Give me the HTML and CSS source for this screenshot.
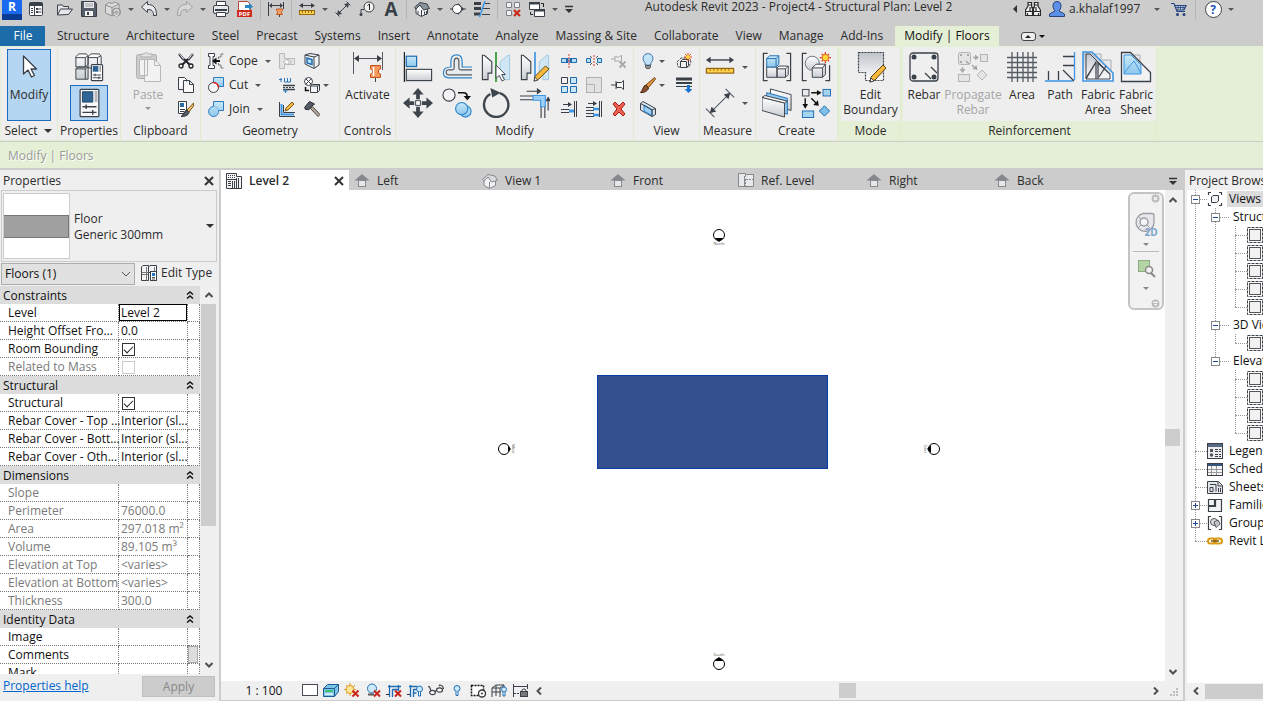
FILE: index.html
```
<!DOCTYPE html>
<html lang="en">
<head>
    <meta charset="utf-8">
    <title>Autodesk Revit 2023 - Project4 - Structural Plan: Level 2</title>
    <link rel="stylesheet" href="styles.css">
</head>
<body>
    <!-- Icon sprite -->
    <svg class="sprite" width="0" height="0" aria-hidden="true">
        <defs>
            <linearGradient id="gr" x1="0" y1="0" x2="0" y2="1"><stop offset="0" stop-color="#fff"/><stop offset="1" stop-color="#c9cdd3"/></linearGradient>
            <linearGradient id="gb" x1="0" y1="0" x2="0" y2="1"><stop offset="0" stop-color="#c8e8fa"/><stop offset="1" stop-color="#8ec8ea"/></linearGradient>
            <linearGradient id="gw" x1="0" y1="0" x2="0" y2="1"><stop offset="0" stop-color="#bfc3ca"/><stop offset="1" stop-color="#fff"/></linearGradient>
        </defs>

        <!-- quick access -->
        <symbol id="i-panel" viewBox="0 0 16 16"><rect x="1.500" y="1.500" width="13" height="13" rx="1" fill="#fff" stroke="#3a4048"/><path d="M1 2h14v3H1z" fill="#3a4048"/><path d="M6.500 5v9M3 7.500h2M3 9.500h2M3 11.500h2M8.500 8h5M8.500 11h5" stroke="#3a4048"/><rect x="8" y="7" width="2" height="2" fill="#3a4048"/><rect x="8" y="10" width="2" height="2" fill="#3a4048"/></symbol>
        <symbol id="i-open" viewBox="0 0 16 16"><path d="M.5 14V4h5l1 1.500h5V8M.5 14l3-6h12l-4 5.500z" fill="#e4e6ea" stroke="#3a4048" stroke-linejoin="round"/></symbol>
        <symbol id="i-save" viewBox="0 0 16 16"><path d="M.5.500h13l2 2v13H.5z" fill="#555d6a" stroke="#3a4048"/><rect x="3" y="1" width="10" height="6" fill="#e8eaed"/><rect x="4" y="10" width="8" height="5" fill="#f4f4f4"/><path d="M4 3h8M4 5h8" stroke="#9aa0a8"/><path d="M6 11h2v3H6z" fill="#3a4048"/></symbol>
        <symbol id="i-sync" viewBox="0 0 16 16"><path d="M.5 4L4 1.500l3 1L10 1l4 2v8l-7 4-6.500-3z" fill="#dcdcdc" stroke="#8f8f8f" stroke-linejoin="round"/><path d="M.5 4L7 6.500 14 3M7 6.500V15" fill="none" stroke="#8f8f8f"/><circle cx="11.500" cy="11" r="4" fill="#b0b0b0" stroke="#8f8f8f"/><path d="M9.500 10.500a2 2 0 0 1 4 0M13.500 12.500a2 2 0 0 1-4 0" fill="none" stroke="#eee"/></symbol>
        <symbol id="i-undo" viewBox="0 0 16 16"><path d="M.5 6L6.500.500v3C12 3.500 15.500 6 15.500 14.500h-3c0-5-2-6-6-6v3z" fill="#e8eaed" stroke="#3a4048" stroke-linejoin="round"/></symbol>
        <symbol id="i-redo" viewBox="0 0 16 16"><path d="M15.500 6L9.500.500v3C4 3.500.5 6 .5 14.500h3c0-5 2-6 6-6v3z" fill="#d8d8d8" stroke="#a2a2a2" stroke-linejoin="round"/></symbol>
        <symbol id="i-print" viewBox="0 0 16 16"><path d="M3.500.500h9V6h-9z" fill="#fff" stroke="#3a4048"/><rect x=".5" y="4.500" width="15" height="8" rx="1.500" fill="#e8eaed" stroke="#3a4048"/><path d="M2 8h12v2H2z" fill="#3a4048"/><path d="M3.500 11.500h9v4h-9z" fill="#fff" stroke="#3a4048"/></symbol>
        <symbol id="i-dimpin" viewBox="0 0 16 16"><path d="M.5 1v14M15.500 1v7M2 4.500h12" stroke="#3a4048" fill="none"/><path d="M1 4.500L4 2v5zM15 4.500L12 2v5z" fill="#3a4048"/><path d="M8.500 8h6v1.500l-1 1V12l1 1.500h-6l1-1.500v-1.500l-1-1z" fill="#f4a26a" stroke="#c8541c"/><path d="M11.500 14v2" stroke="#3a4048"/></symbol>
        <symbol id="i-measure" viewBox="0 0 16 16"><path d="M2 4.500h12" stroke="#3a4048"/><path d="M0 4.500L4 2v5zM16 4.500L12 2v5z" fill="#3a4048"/><rect x=".5" y="9.500" width="15" height="4" fill="#ffd34d" stroke="#94650f"/><path d="M3.500 10v2M6.500 10v2M9.500 10v2M12.500 10v2" stroke="#94650f"/></symbol>
        <symbol id="i-aligned" viewBox="0 0 16 16"><path d="M3 13L13 3M.5 11.500l4 4M11.500.5l4 4" stroke="#3a4048" fill="none"/><path d="M2 14l1-5 4 4zM14 2l-1 5-4-4z" fill="#3a4048"/></symbol>
        <symbol id="i-tag" viewBox="0 0 16 16"><circle cx="10" cy="6" r="5" fill="#f2f2f2" stroke="#3a4048"/><path d="M8.500 4.500L10.500 3v6" stroke="#222" fill="none"/><path d="M5 8.500H2v4" stroke="#3a4048" fill="none"/><circle cx="2" cy="13.500" r="1.500" fill="#3a4048"/></symbol>
        <symbol id="i-house" viewBox="0 0 16 16"><path d="M2 7v5.500l5.500 3 6-3V6L8 3z" fill="#f4f5f7" stroke="#3a4048" stroke-linejoin="round"/><path d="M.5 6.500L6 1.500l7 1.500 2.500 4.500-6 1.500L6 4 2 8z" fill="#8a929c" stroke="#3a4048" stroke-linejoin="round"/><path d="M7.500 9v6" stroke="#3a4048"/><path d="M4 10v3M10.500 10.500v3h2v-3.500" stroke="#3a4048" fill="none"/></symbol>
        <symbol id="i-section" viewBox="0 0 16 16"><path d="M8 2l6 6-6 6z" fill="#3a4048"/><circle cx="7" cy="8" r="4.500" fill="#fff" stroke="#3a4048"/><path d="M0 8h3M13 8h3" stroke="#3a4048"/></symbol>
        <symbol id="i-thin" viewBox="0 0 16 16"><path d="M0 2.500h7M0 7.500h7M0 13h6" stroke="#3a4048" stroke-width="3"/><path d="M10 2.500h6M9 7.500h7M8 13.500h8" stroke="#3a4048"/><path d="M11 0L5.500 16" stroke="#3c96e4" stroke-width="1.500"/></symbol>
        <symbol id="i-closeviews" viewBox="0 0 16 16"><path d="M1.500 1.500h5v5h-5zM9.500 1.500h5v5h-5zM1.500 9.500h5v5h-5z" fill="#f2f2f2" stroke="#7a8088"/><path d="M9 9l6 6M15 9l-6 6" stroke="#c9281a" stroke-width="2.200"/></symbol>
        <symbol id="i-switch" viewBox="0 0 16 16"><path d="M.5 1.500h10v7H.5zM5.500 8.500h10v7h-10z" fill="#fff" stroke="#3a4048"/><path d="M0 1h11v2.500H0zM5 8h11v2.500H5z" fill="#3a4048"/><path d="M12 2.500h2.500V6M4 13.500H1.500V11" stroke="#222" fill="none"/></symbol>
        <symbol id="i-custom" viewBox="0 0 16 16"><path d="M4 5.500h8" stroke="#333" stroke-width="1.500"/><path d="M4 8h8l-4 4z" fill="#333"/></symbol>
        <symbol id="i-binoc" viewBox="0 0 16 16"><path d="M3 1.500h3.500V5L7.500 8v6.500h-7V9L3 5zM9.500 1.500H13V5l2.500 4v5.500h-7V8L9.500 5z" fill="#f4f4f4" stroke="#2a2a2a" stroke-width="1.200"/><path d="M1 10.500h6M9 10.500h6M6.500 6.500h3M3 4h3M10 4h3M2.500 12v2M13.500 12v2M5 6v4M11 6v4" stroke="#2a2a2a" stroke-width="1.200"/></symbol>
        <symbol id="i-user" viewBox="0 0 16 16"><path d="M8 .5c3 0 4 2 4 4.500S10.500 9 10 10l5.500 3v2.500H.5V13L6 10C5.500 9 4 7.500 4 5S5 .5 8 .5z" fill="#5b8fe8" stroke="#28427c"/></symbol>
        <symbol id="i-cart" viewBox="0 0 16 16"><path d="M0 2.500h3l3 8h8M4 4.500h11l-2 4.500H5.500" fill="#c5d5f5" stroke="#26427c" stroke-width="1.200"/><path d="M7 5v4M9.500 5v4M12 5v4M4.500 6.500H14" stroke="#26427c" stroke-width=".8"/><circle cx="6.500" cy="13.500" r="1.500" fill="#26427c"/><circle cx="13" cy="13.500" r="1.500" fill="#26427c"/></symbol>

        <!-- small ribbon icons -->
        <symbol id="i-cutclip" viewBox="0 0 16 16"><path d="M1 1l5 6M15 1l-5 6" stroke="#3a4048" stroke-width="2.500"/><path d="M1.500 1l4.500 5.500M14.500 1L10 6.500" stroke="#d8dbdf"/><path d="M6 6l6 6M10 6l-6 6" stroke="#222" stroke-width="2"/><circle cx="3" cy="13" r="2" fill="#eee" stroke="#222" stroke-width="1.300"/><circle cx="13" cy="13" r="2" fill="#eee" stroke="#222" stroke-width="1.300"/></symbol>
        <symbol id="i-copyclip" viewBox="0 0 16 16"><path d="M.5 12.500V.5h6l2 2v2M5.500 3.500h6l4 4v8h-10z" fill="#f8f8f8" stroke="#3a4048"/><path d="M.5 12.500h5M11.500 3.500v4h4" fill="none" stroke="#3a4048"/></symbol>
        <symbol id="i-match" viewBox="0 0 16 16"><path d="M.5.500h8v12h-8z" fill="#fff" stroke="#3a4048"/><path d="M2 2h4v4H2z" fill="#2a6ea8"/><path d="M2 8.500h5M2 10.500h4" stroke="#3a4048"/><path d="M15.500 2L9 9l2 2 4.500-6z" fill="#f0c070" stroke="#7b5a20"/><path d="M8.500 9l2.500 2.500C10 15 6 15.500 3 15.500 6 14 6 10 8.500 9z" fill="#555d68" stroke="#22262c"/></symbol>
        <symbol id="i-cope" viewBox="0 0 16 16"><path d="M.5.500h6v3H5v9h1.500v3h-6v-3H2v-9H.5z" fill="#fff" stroke="#3a4048"/><path d="M15.500 1h-2.500v3h-2.500v2M15.500 15H13v-3h-2.500v-2" fill="none" stroke="#777"/><path d="M4 8l4.500-3.500V7H12v2H8.500v2.500z" fill="#111"/></symbol>
        <symbol id="i-cut" viewBox="0 0 16 16"><path d="M5.500.500h10v9h-10z" fill="url(#gb)" stroke="#2a7ac0"/><circle cx="5.500" cy="10.500" r="5" fill="#f6f6f6" stroke="#3a4048"/><path d="M5 5.500a5 5 0 0 1 5.500 5" fill="none" stroke="#e02020" stroke-width="1.500"/></symbol>
        <symbol id="i-join" viewBox="0 0 16 16"><path d="M5.500.500h10v9h-5A5 5 0 1 1 5.500 5.500z" fill="url(#gb)" stroke="#2a7ac0"/><path d="M5.500 5.500a5 5 0 0 1 5 4" fill="none" stroke="#7ab8dc"/></symbol>
        <symbol id="i-wallcope" viewBox="0 0 16 16"><path d="M.5.500h5v5h10v6h-10v4h-5z" fill="#e4e4e4" stroke="#b8b8b8"/><path d="M4 9l5-3v2h3v2H9v2z" fill="#fff" stroke="#b8b8b8"/></symbol>
        <symbol id="i-beam" viewBox="0 0 16 16"><path d="M0 2.500h3M5.500 1v4h6V1M8.500 1v4" stroke="#2a7ac0" fill="none"/><path d="M4 8.500h12M4 12.500h12" stroke="#3a4048" stroke-width="1.300"/><path d="M4 10.500h12" stroke="#3a4048" stroke-dasharray="2 1"/><path d="M6.500 12v4M4.500 14h4M2 1v4" stroke="#2a7ac0"/></symbol>
        <symbol id="i-demo" viewBox="0 0 16 16"><path d="M.5 1v14.500H16M4.500 4v7.500H16" fill="none" stroke="#3a4048"/><path d="M2.500 3v10.500H15" fill="none" stroke="#3c96e4" stroke-width="2"/><path d="M6 10l1-3 6-6 2 2-6 6z" fill="#f5b83c" stroke="#7b5a20"/></symbol>
        <symbol id="i-face" viewBox="0 0 16 16"><path d="M1 2l5-1.500 9 1.500v10l-5 3.500L1 11z" fill="#f2f3f5" stroke="#3a4048" stroke-linejoin="round"/><path d="M1 2l9 2v11M10 4l5-2" fill="none" stroke="#3a4048"/><path d="M3 5l5 1.500v5L3 10z" fill="#b8def4" stroke="#1c6db4" stroke-width="1.500"/></symbol>
        <symbol id="i-wheel" viewBox="0 0 16 16"><circle cx="4.500" cy="4.500" r="4" fill="#fff" stroke="#3a4048"/><path d="M2 2l5 5M7 2L2 7" stroke="#3a4048"/><path d="M6.500 9l2-1.500h7v6l-2 2h-7z" fill="#f4f5f7" stroke="#3a4048"/><path d="M6.500 9h7v6M13.500 9l2-1.500" fill="none" stroke="#3a4048"/><path d="M1.500 10v3.500H5" stroke="#111" fill="none" stroke-width="1.500"/></symbol>
        <symbol id="i-hammer" viewBox="0 0 16 16"><path d="M6.500 7.500l2-2L16 13.500 14 15.500z" fill="#b5a79a" stroke="#4a4440"/><path d="M.5 6.500l5-6 5 2.500-1 1-2 1-3 4-1.500-1-1 1z" fill="#555d68" stroke="#22262c"/></symbol>
        <symbol id="i-split" viewBox="0 0 16 16"><path d="M.5 5.500h5v4h-5zM10.500 5.500h5v4h-5z" fill="#b8def4" stroke="#1f6bb0"/><path d="M5 7.500h2.500M8.500 7.500H11" stroke="#1f6bb0" stroke-width="5"/><path d="M8 1v14" stroke="#d63a2a" stroke-dasharray="2 1"/></symbol>
        <symbol id="i-splitgap" viewBox="0 0 16 16"><path d="M.5 5.500h4v4h-4zM11.500 5.500h4v4h-4z" fill="#b8def4" stroke="#1f6bb0"/><path d="M8 2v12" stroke="#d63a2a" stroke-dasharray="2 1"/><path d="M4 3l2 2M12 3l-2 2M4 12l2-2M12 12l-2-2" stroke="#555"/></symbol>
        <symbol id="i-unpin" viewBox="0 0 16 16"><path d="M0 6h4M4 3v6M4.500 4h4l2-2v8l-2-2h-4" fill="#eee" stroke="#aaa"/><path d="M8.500 8.500l6 6M14.500 8.500l-6 6" stroke="#aaa" stroke-width="2"/></symbol>
        <symbol id="i-array" viewBox="0 0 16 16"><path d="M9.500.500h6v6h-6zM9.500 9.500h6v6h-6zM.5 9.500h6v6h-6z" fill="#c8e8fa" stroke="#1f6bb0"/><path d="M.5.500h6v6h-6z" fill="#f4f4f4" stroke="#3a4048"/></symbol>
        <symbol id="i-scale" viewBox="0 0 16 16"><path d="M.5.500h15v15H.5zM.5 7.500h8v8h-8z" fill="#e2e2e2" stroke="#b0b0b0"/></symbol>
        <symbol id="i-pin" viewBox="0 0 16 16"><path d="M0 8h5" stroke="#3a4048"/><path d="M5 4v8M5.500 5.500h5l2-2v9l-2-2h-5z" fill="#f6f6f6" stroke="#3a4048"/></symbol>
        <symbol id="i-trim1" viewBox="0 0 16 16"><path d="M2 3.500h6M0 8.500h8M0 11.500h8" stroke="#3a4048"/><path d="M7 1l4 2.500L7 6z" fill="#3a4048"/><path d="M13.500 0v16M15.500 0v16" stroke="#3a4048"/><path d="M8 10h5" stroke="#3c96e4" stroke-width="3"/></symbol>
        <symbol id="i-trim2" viewBox="0 0 16 16"><path d="M2 2.500h6M0 6.500h8M0 9.500h8M0 12.500h8M0 15.500h8" stroke="#3a4048"/><path d="M7 0l4 2.500L7 5z" fill="#3a4048"/><path d="M13.500 0v16M15.500 0v16" stroke="#3a4048"/><path d="M7 8h6M7 14h6" stroke="#3c96e4" stroke-width="2.500"/></symbol>
        <symbol id="i-delete" viewBox="0 0 16 16"><path d="M2 3l2-2 4 4 4-4 2 2-4 5 4 5-2 2-4-4-4 4-2-2 4-5z" fill="#f06050" stroke="#a81c14"/></symbol>
        <symbol id="i-bulb" viewBox="0 0 16 16"><path d="M8 .5a5 5 0 0 1 3 9V12H5V9.500a5 5 0 0 1 3-9z" fill="#c4e2f8" stroke="#4a7ab0"/><path d="M5.500 12.500h5v1.500l-1 1.500h-3l-1-1.500z" fill="#999" stroke="#555"/></symbol>
        <symbol id="i-brush" viewBox="0 0 16 16"><path d="M14.500.5L6 8l2.500 2.500L15.500 2z" fill="#e89a40" stroke="#6b3c10"/><path d="M5.500 8l3 3C8 14 4 16 .5 15.500 3 13 3 9 5.500 8z" fill="#8a5030" stroke="#4a2810"/></symbol>
        <symbol id="i-solid" viewBox="0 0 16 16"><path d="M.5 2.500L3 .5l12.500 7v6l-3.500 2L.5 9z" fill="#dfe3e8" stroke="#3a4048" stroke-linejoin="round"/><path d="M4 4l8 4.500v6L4 10z" fill="#9fd0f8" stroke="#1f8ae0"/><path d="M.5 2.500L12 9v6.500M12 9l3.500-1.500" fill="none" stroke="#3a4048"/></symbol>
        <symbol id="i-newview" viewBox="0 0 16 16"><path d="M1 9l4-4h8l2 4-2 5H2z" fill="none" stroke="#555" stroke-dasharray="3 1"/><path d="M4.500 8.500h6v6h-6zM4.500 8.500l2-2h6v6l-2 2" fill="#f2f2f2" stroke="#3a4048"/><path d="M12 0v8M8 4h8M9 1l6 6M15 1L9 7" stroke="#e0401c"/><circle cx="12" cy="4" r="2" fill="#ffd83a"/></symbol>
        <symbol id="i-linework" viewBox="0 0 16 16"><path d="M0 2h16" stroke="#3a4048" stroke-width="3"/><path d="M0 6h16" stroke="#3a4048" stroke-width="2"/><path d="M0 9.500h16" stroke="#3a4048"/><path d="M11 8v4H8.500l4 4 4-4H14V8z" fill="#1d74d0"/></symbol>

        <!-- large ribbon icons -->
        <symbol id="i-arrow" viewBox="0 0 32 32"><path d="M10.500 5v18l4.500-4 3.500 7 3-1.500L18 18h5.500z" fill="#fff" stroke="#3a4048" stroke-width="1.300" stroke-linejoin="round"/></symbol>
        <symbol id="i-typeprops" viewBox="0 0 32 32"><g fill="url(#gr)" stroke="#3a4048" stroke-linejoin="round"><path d="M2 5l3-3h8l2 2v9l-3 3H2zM15 5l3-3h9l2 3v9l-2 3H15zM2 18l2-2h11v13H2z"/><path d="M2 6h10l3-2M12 6v10M15 6h10l4-2M25 6v8M12 18v11M2 18h10l3-2" fill="none"/></g><rect x="18.500" y="13.500" width="12" height="17" rx="1" fill="#fff" stroke="#3a4048" stroke-width="1.200"/><path d="M20 15h6v6h-6z" fill="#2a5f94"/><path d="M28 15v6" stroke="#999" stroke-width="1.500"/><path d="M20 24.500h9M20 27.500h9M22.500 23v3M26.500 26v3" stroke="#3a4048"/></symbol>
        <symbol id="i-props" viewBox="0 0 32 32"><rect x="6.500" y="1.500" width="20" height="29" rx="1" fill="#f8f8f8" stroke="#3a4048" stroke-width="1.300"/><path d="M9 4h11v11H9z" fill="#2f6595" stroke="#1c4468"/><path d="M22 3h3v12h-3z" fill="#b4b8be"/><path d="M9 20h15M9 26h15M13 17.500v5M20 23.500v5" stroke="#3a4048" stroke-width="1.500"/></symbol>
        <symbol id="i-paste" viewBox="0 0 32 32"><rect x="4.500" y="3.500" width="20" height="24" rx="2" fill="#cdcdcd" stroke="#b0b0b0"/><path d="M9 6V3h3q2.500-3 5 0h3v3z" fill="#e4e4e4" stroke="#b0b0b0"/><path d="M7.500 24.500V8.500h8v16zM12.500 8.500h10l6 6v16h-16z" fill="#f2f2f2" stroke="#b8b8b8"/><path d="M22.500 8.500v6h6" fill="none" stroke="#b8b8b8"/></symbol>
        <symbol id="i-activate" viewBox="0 0 32 32"><path d="M1.500 1v22M30.500 1v18M3 7.500h26" stroke="#555b64" fill="none"/><path d="M2 7.500L7 4v7zM30 7.500L25 4v7z" fill="#3a4048"/><path d="M18.500 14.500h10v3.500l-2 1v3l2 1v3.500h-10V23l2-1v-3l-2-1z" fill="#f29a5c" stroke="#c8541c"/><path d="M21.500 16v9" stroke="#fff" stroke-width="1.500"/><path d="M23.500 27v4" stroke="#3a4048"/></symbol>
        <symbol id="i-align" viewBox="0 0 32 32"><path d="M1.500 0v32" stroke="#222" stroke-width="1.300"/><rect x="3.500" y="4.500" width="11" height="11" fill="url(#gb)" stroke="#1f6bb0" stroke-width="1.300"/><rect x="3.500" y="18.500" width="27" height="12" fill="url(#gr)" stroke="#3a4048" stroke-width="1.200"/></symbol>
        <symbol id="i-offset" viewBox="0 0 32 32"><path d="M32 27.500H7q-5.500 0-5.500-5.500 0-6 8-6V10q0-7 6-7t6 7v6H32" fill="none" stroke="#2a84cc" stroke-width="1.300"/><path d="M32 24.500H8q-3.500 0-3.500-3t3.500-2.500h3q2 0 2-2v-7q0-3.500 2.500-3.500T18 10v7q0 2 2 2h12" fill="#e8eaed" stroke="#555b64" stroke-width="1.300"/></symbol>
        <symbol id="i-mirrorpick" viewBox="0 0 32 32"><path d="M1.500 3.500h2l8 7v12h-4v7h-6z" fill="url(#gr)" stroke="#3a4048" stroke-width="1.200"/><path d="M30.500 3.500h-2l-8 7v12h4v7h6z" fill="#cfe6f4" stroke="#9cc6e0"/><path d="M16 0v32" stroke="#2a9a2a" stroke-width="1.800"/><path d="M16 14v14l3.500-3 3 6 2.500-1.500-3-5.500h4z" fill="#fff" stroke="#3a4048"/></symbol>
        <symbol id="i-mirrordraw" viewBox="0 0 32 32"><path d="M1.500 3.500h2l8 7v12h-4v7h-6z" fill="url(#gr)" stroke="#3a4048" stroke-width="1.200"/><path d="M30.500 3.500h-2l-8 7v12h4v7h6z" fill="#cfe6f4" stroke="#9cc6e0"/><path d="M16 0v28" stroke="#3c96e4" stroke-width="1.800"/><path d="M15 31l1-5L27 15l4 3-11 11z" fill="#f5b83c" stroke="#5e4418"/><path d="M15 31l1-4 3 3z" fill="#fff" stroke="#3a4048"/></symbol>
        <symbol id="i-move" viewBox="0 0 32 32"><path d="M16 0l6 7h-4v5h-4V7h-4zM16 32l6-7h-4v-5h-4v5h-4zM0 16l7-6v4h5v4H7v4zM32 16l-7-6v4h-5v4h5v4z" fill="#3f454d"/><rect x="13.500" y="13.500" width="5" height="5" fill="#fff" stroke="#3a4048"/></symbol>
        <symbol id="i-copy" viewBox="0 0 32 32"><circle cx="7.500" cy="7.500" r="6.500" fill="#f4f4f4" stroke="#3a4048" stroke-width="1.200"/><path d="M17 5h6q4 0 4 5" fill="none" stroke="#111" stroke-width="1.700"/><path d="M23 8.500h8L27 13z" fill="#111"/><circle cx="25" cy="25" r="6" fill="url(#gb)" stroke="#2a84cc" stroke-width="1.200"/><circle cx="21" cy="22" r="6.500" fill="url(#gb)" stroke="#2a84cc" stroke-width="1.200"/></symbol>
        <symbol id="i-rotate" viewBox="0 0 32 32"><path d="M20 5.500a13 13 0 1 1-10 1" fill="none" stroke="#3f454d" stroke-width="2.500"/><path d="M10 0l11 5-9 5z" fill="#3f454d"/></symbol>
        <symbol id="i-trim" viewBox="0 0 32 32"><path d="M7 3.500h12M30 24V13" stroke="#3a4048" stroke-width="1.200"/><path d="M18 0l5 3.500L18 7zM27 14l3-5 3 5z" fill="#3a4048"/><path d="M0 8.500h14M0 12.500h14M22.500 18v14M26.500 18v14" stroke="#3a4048" stroke-width="1.200"/><path d="M14 8h13v12h-5v-7h-8z" fill="#9fd0f8" stroke="#3c96e4" stroke-width="1.200"/></symbol>
        <symbol id="i-bigmeasure" viewBox="0 0 32 32"><path d="M4 8.500h24" stroke="#3a4048" stroke-width="1.500"/><path d="M1 8.500L6 5v7zM31 8.500L26 5v7z" fill="#3a4048"/><rect x="1.500" y="17.500" width="29" height="5" fill="#ffd04a" stroke="#94650f" stroke-width="1.300"/><path d="M5.500 18v2M9.500 18v2M13.500 18v2M17.500 18v2M21.500 18v2M25.500 18v2" stroke="#94650f"/></symbol>
        <symbol id="i-bigaligned" viewBox="0 0 32 32"><path d="M7 25L25 7M1 22l9 9M22 1l9 9" stroke="#555b64" fill="none" stroke-width="1.200"/><path d="M5 27l2-7 5 5zM27 5l-2 7-5-5z" fill="#3a4048"/></symbol>
        <symbol id="i-group" viewBox="0 0 32 32"><path d="M6 1.500H1.500v29H6M26 1.500h4.500v29H26" fill="none" stroke="#3a4048" stroke-width="1.300"/><g stroke-linejoin="round"><path d="M5 16h11v11H5zM16 17l2-2h10v9l-3 3h-9z" fill="url(#gr)" stroke="#3a4048"/><path d="M5 7l3-3h10v9l-3 3H5z" fill="url(#gb)" stroke="#1f6bb0"/><path d="M5 7h10l3-3M15 7v9" fill="none" stroke="#1f6bb0"/><path d="M16 18h9l3-3M25 18v9" fill="none" stroke="#3a4048"/></g></symbol>
        <symbol id="i-newgroup" viewBox="0 0 32 32"><path d="M6 1.500H1.500v29H6M26 30.500h4.500V14" fill="none" stroke="#3a4048" stroke-width="1.300"/><circle cx="12" cy="12" r="7.500" fill="url(#gr)" stroke="#666c74"/><path d="M12 17l4-4h10v11l-3 3H12z" fill="url(#gr)" stroke="#3a4048"/><path d="M12 17h11l3-4M23 17v10" fill="none" stroke="#3a4048"/><path d="M26 0v12M20 6h12M22 2l8 8M30 2l-8 8" stroke="#d9381c" stroke-width="1.300"/><circle cx="26" cy="6" r="3.500" fill="#ffd83a" stroke="#e0651c"/></symbol>
        <symbol id="i-assembly" viewBox="0 0 32 32"><path d="M9 1l22 6v17l-22-7z" fill="url(#gr)" stroke="#3a4048"/><path d="M5 5l22 6v17L5 20z" fill="#8fc8f0" stroke="#1f6bb0"/><path d="M0 10l24 6v15L0 24z" fill="url(#gr)" stroke="#3a4048"/><path d="M0 10l3-2 24 6-3 2z" fill="#f8f8f8" stroke="#3a4048"/></symbol>
        <symbol id="i-similar" viewBox="0 0 32 32"><rect x="1.500" y="1.500" width="7" height="7" fill="#e8eaed" stroke="#3a4048"/><rect x="23.500" y="1.500" width="8" height="7" fill="#a4d4f0" stroke="#1f6bb0"/><rect x="1.500" y="24.500" width="12" height="7" fill="#a4d4f0" stroke="#1f6bb0"/><path d="M25 19l5.500 5.500L25 30l-5.500-5.500z" fill="#7fc0e8" stroke="#1f6bb0"/><path d="M11 5h8M4.500 11v7M11 11l5 5" stroke="#111" stroke-width="1.500"/><path d="M17 2l5 3-5 3zM1.500 17h6l-3 5zM19 19l-6-1 5-5z" fill="#111"/></symbol>
        <symbol id="i-editbound" viewBox="0 0 32 32"><path d="M3 1h26v29H16v-8H3z" fill="url(#gw)"/><path d="M3.500 1.500h25v28h-18v-8h-7z" fill="url(#gw)" stroke="#3a4048" stroke-dasharray="2 1" stroke-width="1.200"/><path d="M15 31l1-5L28 14l3 3-11 12z" fill="#f5b83c" stroke="#5e4418"/><path d="M15 31l1-4 3 3z" fill="#fff" stroke="#3a4048"/></symbol>
        <symbol id="i-rebar" viewBox="0 0 32 32"><rect x="2" y="2" width="28" height="28" rx="3" fill="#f0f0f0" stroke="#3a4048" stroke-width="1.300"/><g fill="#3a4048"><circle cx="6" cy="6" r="2.500"/><circle cx="26" cy="6" r="2.500"/><circle cx="6" cy="26" r="2.500"/><circle cx="26" cy="26" r="2.500"/></g><path d="M17 22l6 6M23 16l6 6" stroke="#3a4048" stroke-width="1.300"/></symbol>
        <symbol id="i-propagate" viewBox="0 0 32 32"><g fill="#e4e4e4" stroke="#b4b4b4"><rect x="1.500" y="1.500" width="12" height="12" rx="2"/><rect x="23.500" y="3.500" width="7" height="7"/><rect x="1.500" y="23.500" width="11" height="7"/><path d="M25 19l5 5-5 5-5-5z"/></g><path d="M16 6.500h4M5.500 16v4M15 14l3 3M9 10l3 3" stroke="#a8a8a8" stroke-width="1.500"/><path d="M18 3.500l4 3-4 3zM2.500 18h6l-3 4zM20.500 19l-5-1 4-4z" fill="#a8a8a8"/><path d="M3 4h2M10 4h2M3 11h2" stroke="#a8a8a8" stroke-width="2"/></symbol>
        <symbol id="i-area" viewBox="0 0 32 32"><path d="M6 1v30M11.500 1v30M17 1v30M22 1v30M27 1v30M1 6.500h30M1 11.500h30M1 16.500h30M1 21.500h30M1 26.500h30" stroke="#555b64" stroke-width="1.300"/></symbol>
        <symbol id="i-path" viewBox="0 0 32 32"><path d="M30.500 1v28M1 30h28" stroke="#3c96e4" stroke-width="1.300"/><path d="M19 5.500h11M19 14.500h11M4.500 20v9M14.500 20v9M19 19l11 11" stroke="#3a4048" stroke-width="1.300"/></symbol>
        <symbol id="i-fabarea" viewBox="0 0 32 32"><path d="M12 3h7v10M20 9h9v12" fill="#e6e8eb" stroke="#a8acb2"/><path d="M2 1h8l21 21v8H1V1z" fill="url(#gw)" stroke="#3c96e4" stroke-width="1.600"/><path d="M4 3h4l20 20v5H4z" fill="none" stroke="#3a4048"/><path d="M4 28l10-17v17M16 28V12l12 11M14 11L4 27M17 26l7-11" fill="none" stroke="#3a4048" stroke-width="1.200"/></symbol>
        <symbol id="i-fabsheet" viewBox="0 0 32 32"><path d="M12 4h8v9" fill="#e6e8eb" stroke="#a8acb2"/><path d="M1.500 1.500h9l20 20v9h-29z" fill="#f2f2f2" stroke="#3a4048" stroke-width="1.300"/><path d="M4 4h7l10 10v9H4z" fill="url(#gb)" stroke="#3c96e4"/><path d="M4 22l10-12 7 12" fill="none" stroke="#3c96e4"/></symbol>

        <!-- palettes and view tabs -->
        <symbol id="i-edittype" viewBox="0 0 16 16"><path d="M.5 2l1.500-1.500h5.500v15h-7zM7.500 2L9 .5h6.500v7h-8z" fill="#f4f4f4" stroke="#3a4048"/><path d="M.5 7.500h7M.5 9.500h7M5.500 2v13.500M13.500 2v5" stroke="#777"/><rect x="9.500" y="6.500" width="6" height="9" fill="#fff" stroke="#3a4048"/><path d="M11 8h3v3h-3z" fill="#1d74d0"/><path d="M11 12.500h3M11 14h3" stroke="#555"/></symbol>
        <symbol id="i-plan" viewBox="0 0 16 16"><path d="M.5.500h10v3h5v12H.5z" fill="#f4f4f4" stroke="#3a4048"/><path d="M2 2.500h8M2 4.500h8" stroke="#3a4048" stroke-dasharray="1 1"/><path d="M1 6.500h9" stroke="#3a4048"/><path d="M2 8.500h3M2 10.500h3M2 12.500h3M6.500 8v7M8.500 8v7M10.500 5v10M12.500 5v10" stroke="#3a4048"/></symbol>
        <symbol id="i-elev" viewBox="0 0 16 16"><path d="M8 1l7.500 6.500H.5z" fill="#85888d"/><rect x="4.500" y="7.500" width="7" height="6" fill="#e6e8ea" stroke="#85888d"/></symbol>
        <symbol id="i-view3d" viewBox="0 0 16 16"><path d="M2 7v5.500l5.500 3 6-3V6L8 3z" fill="#f0f1f3" stroke="#85888d" stroke-linejoin="round"/><path d="M.5 6.500L6 1.500l7 1.500 2.500 4.500-6 1.500L6 4 2 8z" fill="#d8dadd" stroke="#85888d" stroke-linejoin="round"/><path d="M7.500 9v6" stroke="#85888d"/></symbol>
        <symbol id="i-reflevel" viewBox="0 0 16 16"><path d="M.5.500h7v3h-1v10h-6zM6.500 3.500l2-2h7v12h-9z" fill="#e8e9eb" stroke="#85888d"/><path d="M8 6.500h7M7.500 6v7" stroke="#85888d" stroke-dasharray="2 1"/></symbol>
        <symbol id="i-x" viewBox="0 0 10 10"><path d="M1 1l8 8M9 1L1 9" stroke="#333" stroke-width="2"/></symbol>
        <symbol id="i-up2" viewBox="0 0 8 8"><path d="M1 3.500L4 1l3 2.500M1 7.500L4 5l3 2.500" fill="none" stroke="#111" stroke-width="1.500"/></symbol>
        <symbol id="i-chev" viewBox="0 0 8 8"><path d="M.5 6L4 2.500 7.500 6" fill="none" stroke="#505050" stroke-width="2"/></symbol>

        <!-- view control bar -->
        <symbol id="i-detail" viewBox="0 0 16 16"><rect x=".5" y="1.500" width="15" height="11" fill="#fff" stroke="#444b55"/></symbol>
        <symbol id="i-style" viewBox="0 0 16 16"><path d="M.5 5.500l4-4h11v7l-4 5H.5z" fill="#7cc4e8" stroke="#1c5c94"/><path d="M.5 5.500h11l4-4M11.500 5.500v8" fill="none" stroke="#1c5c94"/><path d="M2 8h8" stroke="#2fc050" stroke-width="1.500"/><path d="M2 11h8" stroke="#f0f4f8" stroke-width="1.500"/></symbol>
        <symbol id="i-sun" viewBox="0 0 16 16"><path d="M6 0v13M0 6.500h12M2 2l9 9M11 2l-9 9" stroke="#e09a1c"/><circle cx="6" cy="6.500" r="4" fill="#ffe69a" stroke="#e09a1c"/><path d="M8.500 7.500l6 6M14.500 7.500l-6 6" stroke="#c8241a" stroke-width="2"/></symbol>
        <symbol id="i-shadow" viewBox="0 0 16 16"><circle cx="7" cy="5.500" r="4.500" fill="#cdeafc" stroke="#2a6ea8"/><path d="M3 11.500h6" stroke="#555" stroke-width="2"/><path d="M9 7.500l6 6M15 7.500l-6 6" stroke="#c8241a" stroke-width="2"/></symbol>
        <symbol id="i-crop" viewBox="0 0 16 16"><path d="M3.500 2v12M6.500 6v8M2 3.500h13M6.500 6.500h6M12.500 2v6" stroke="#1c6db4" stroke-width="1.300" fill="none"/><path d="M0 11.500h3" stroke="#333"/><path d="M9 7.500l6 6M15 7.500l-6 6" stroke="#c8241a" stroke-width="2"/></symbol>
        <symbol id="i-showcrop" viewBox="0 0 16 16"><path d="M3.500 2v12M6.500 6v8M2 3.500h8M6.500 6.500h3M6.500 10h3" stroke="#1c6db4" stroke-width="1.300" fill="none"/><path d="M0 11.500h3" stroke="#333"/><circle cx="12.500" cy="6" r="3" fill="#cdeafc" stroke="#1c6db4"/><path d="M11.500 9v4h2V9" fill="#fff" stroke="#1c6db4"/></symbol>
        <symbol id="i-glasses" viewBox="0 0 16 16"><path d="M0 4q1.500-1 2 1l1 3M7 9q1-2 2-1.500M15.500 6q0-3-3.500-4l-1 1" fill="none" stroke="#3a4048" stroke-width="1.200"/><ellipse cx="4.500" cy="9.500" rx="2.800" ry="2.200" fill="#fff" stroke="#3a4048" stroke-width="1.200"/><ellipse cx="11.500" cy="7" rx="3" ry="2.200" fill="#fff" stroke="#3a4048" stroke-width="1.200"/></symbol>
        <symbol id="i-reveal" viewBox="0 0 16 16"><circle cx="8" cy="5.500" r="3" fill="#cdeafc" stroke="#1c6db4"/><path d="M7 8.500v4h2v-4" fill="#fff" stroke="#1c6db4"/></symbol>
        <symbol id="i-tempview" viewBox="0 0 16 16"><path d="M1.500 2.500h12v10h-12z" fill="#fff" stroke="#111" stroke-dasharray="2 1" stroke-width="1.500"/><circle cx="12" cy="10.500" r="3.500" fill="#fff" stroke="#333" stroke-width="1.300"/><circle cx="12" cy="10.500" r="1" fill="#333"/></symbol>
        <symbol id="i-analytic" viewBox="0 0 16 16"><path d="M1 5l4-3h8v4M1 5h8v9M1 5v9M5 2v11M1 9h9M9 5l4-3" stroke="#3a4048" fill="none"/><circle cx="13" cy="6.500" r="2.500" fill="#cdeafc" stroke="#1c6db4"/><path d="M12 9v4h2V9" fill="#fff" stroke="#1c6db4"/></symbol>
        <symbol id="i-lockdim" viewBox="0 0 16 16"><path d="M1.500 1v13M15.500 1v5M2 3.500h13" stroke="#3a4048"/><path d="M2 10.500h6" stroke="#3a4048" stroke-dasharray="2 1"/><path d="M10 8.500V7q2-2.500 4 0v1.500" fill="none" stroke="#3a4048"/><rect x="8.500" y="8.500" width="7" height="5" fill="#777" stroke="#3a4048"/></symbol>

        <!-- project browser -->
        <symbol id="i-views" viewBox="0 0 16 16"><path d="M4 1.500H1.500V4M12 1.500h2.500V4M4 14.500H1.500V12M12 14.500h2.500V12" fill="none" stroke="#3a4048" stroke-width="1.200"/><path d="M4.500 6l1.500-1.500h5.500V10l-2 1.500h-5z" fill="#f0f0f0" stroke="#3a4048"/></symbol>
        <symbol id="i-viewitem" viewBox="0 0 16 16"><path d="M.5.500h15v15H.5z" fill="none" stroke="#3a4048" stroke-dasharray="3 1"/><rect x="2.500" y="2.500" width="11" height="11" fill="#f2f2f2" stroke="#555"/></symbol>
        <symbol id="i-legend" viewBox="0 0 16 16"><rect x=".5" y=".5" width="15" height="15" fill="#eceef0" stroke="#3a4048"/><path d="M1 1h14v3H1z" fill="#566a84"/><path d="M3 6h3v3H3z" fill="#555"/><circle cx="4.500" cy="12" r="1.700" fill="#555"/><path d="M8 6.500h6M8 8.500h6M8 11.500h6M8 13.500h6" stroke="#3a4048" stroke-dasharray="3 1"/></symbol>
        <symbol id="i-schedule" viewBox="0 0 16 16"><rect x=".5" y="2.500" width="15" height="12" fill="#f4f4f4" stroke="#3a4048"/><path d="M1 3h14v2H1z" fill="#39577e"/><path d="M1 8.500h14M1 11.500h14M4.500 5v9M9.500 5v9" stroke="#999"/></symbol>
        <symbol id="i-sheet" viewBox="0 0 16 16"><path d="M.5 2.500h11l4 4v8H.5z" fill="#e4e7ea" stroke="#3a4048"/><path d="M3 5.500h6v7M3 8.500h3v4H3zM11 3v4h4M11.500 9v4M13.500 9v4" fill="none" stroke="#3a4048"/></symbol>
        <symbol id="i-family" viewBox="0 0 16 16"><path d="M1.500 2.500h6v6h-6zM8.500 2.500h6v12h-13v-5h7z" fill="#f0f2f4" stroke="#3a4048" stroke-width="1.200"/></symbol>
        <symbol id="i-groups" viewBox="0 0 16 16"><path d="M4 1.500H1.500v13H4M12 1.500h2.500v13H12" fill="none" stroke="#3a4048" stroke-width="1.200"/><circle cx="7" cy="7" r="3.500" fill="#d8dbdf" stroke="#555"/><path d="M7 7l4-2 2 4-4 3.500z" fill="#c9cdd3" fill-opacity=".8" stroke="#555"/></symbol>
        <symbol id="i-links" viewBox="0 0 16 16"><rect x="1" y="5.500" width="8" height="5" rx="2.500" fill="none" stroke="#d99a14" stroke-width="2"/><rect x="7" y="5.500" width="8" height="5" rx="2.500" fill="none" stroke="#d99a14" stroke-width="2"/><path d="M4 8h8" stroke="#7b5310" stroke-width="1.500"/></symbol>
    </svg>

    <header class="title-bar">
        <button class="app-logo" aria-label="Revit">R</button>
        <button class="qat panel-btn" aria-label="Home"><svg><use href="#i-panel"/></svg></button>
        <button class="qat" aria-label="Open"><svg><use href="#i-open"/></svg></button>
        <button class="qat" aria-label="Save"><svg><use href="#i-save"/></svg></button>
        <button class="qat" aria-label="Synchronize" disabled><svg><use href="#i-sync"/></svg></button>
        <button class="caret" aria-label="More"></button>
        <button class="qat" aria-label="Undo"><svg><use href="#i-undo"/></svg></button>
        <button class="caret" aria-label="Undo list"></button>
        <button class="qat" aria-label="Redo" disabled><svg><use href="#i-redo"/></svg></button>
        <button class="caret" aria-label="Redo list"></button>
        <button class="qat" aria-label="Print"><svg><use href="#i-print"/></svg></button>
        <button class="qat" aria-label="Export to PDF"><svg viewBox="0 0 16 16"><path d="M1.500.5h9l3 3v11h-12z" fill="#fff" stroke="#b4463a"/><path d="M0 9h15v7H0z" fill="#cf2a1c"/><path d="M8 4h4V2l4 3.500L12 9V7H8z" fill="#2a86c4"/><text x="7.500" y="15" font-size="6" font-weight="700" text-anchor="middle" fill="#fff">PDF</text></svg></button>
        <span class="sep"></span>
        <button class="qat" aria-label="Activate controls"><svg><use href="#i-dimpin"/></svg></button>
        <span class="sep"></span>
        <button class="qat" aria-label="Measure"><svg><use href="#i-measure"/></svg></button>
        <button class="caret" aria-label="Measure options"></button>
        <button class="qat" aria-label="Aligned dimension"><svg><use href="#i-aligned"/></svg></button>
        <button class="qat" aria-label="Tag by category"><svg><use href="#i-tag"/></svg></button>
        <button class="qat text-tool">A</button>
        <span class="sep"></span>
        <button class="qat" aria-label="Default 3D view"><svg><use href="#i-house"/></svg></button>
        <button class="caret" aria-label="3D view options"></button>
        <button class="qat" aria-label="Section"><svg><use href="#i-section"/></svg></button>
        <button class="qat" aria-label="Thin lines"><svg><use href="#i-thin"/></svg></button>
        <span class="sep"></span>
        <button class="qat" aria-label="Close inactive views"><svg><use href="#i-closeviews"/></svg></button>
        <button class="qat" aria-label="Switch windows"><svg><use href="#i-switch"/></svg></button>
        <button class="caret" aria-label="Window list"></button>
        <button class="qat customise" aria-label="Customize"><svg><use href="#i-custom"/></svg></button>
        <div class="window-title">Autodesk Revit 2023 - Project4 - Structural Plan: Level 2</div>
        <div class="account">
            <button class="caret left" aria-label="Collapse search"></button>
            <button class="qat" aria-label="Search"><svg><use href="#i-binoc"/></svg></button>
            <button class="qat" aria-label="Account"><svg><use href="#i-user"/></svg></button>
            <span class="user-name">a.khalaf1997</span>
            <button class="caret" aria-label="Account menu"></button>
            <button class="qat cart" aria-label="App store"><svg><use href="#i-cart"/></svg></button>
            <span class="sep"></span>
            <button class="qat"><span class="help">?</span></button>
            <button class="caret" aria-label="Help menu"></button>
        </div>
    </header>

    <nav class="ribbon-tabs">
        <button class="tab file">File</button>
        <button class="tab">Structure</button>
        <button class="tab">Architecture</button>
        <button class="tab">Steel</button>
        <button class="tab">Precast</button>
        <button class="tab">Systems</button>
        <button class="tab">Insert</button>
        <button class="tab">Annotate</button>
        <button class="tab">Analyze</button>
        <button class="tab">Massing &amp; Site</button>
        <button class="tab">Collaborate</button>
        <button class="tab">View</button>
        <button class="tab">Manage</button>
        <button class="tab">Add-Ins</button>
        <button class="tab active">Modify | Floors</button>
        <button class="minimise" aria-label="Minimize ribbon"><span></span></button>
        <button class="caret dark" aria-label="Ribbon options"></button>
    </nav>

    <section class="ribbon">
        <div class="group w-select">
            <div class="tools"><button class="big pressed"><svg><use href="#i-arrow"/></svg>Modify</button></div>
            <button class="group-title">Select <span class="caret big-caret"></span></button>
        </div>
        <div class="group w-props">
            <div class="tools stack">
                <button class="icon32" aria-label="Type properties"><svg><use href="#i-typeprops"/></svg></button>
                <button class="icon32 pressed" aria-label="Properties palette"><svg><use href="#i-props"/></svg></button>
            </div>
            <div class="group-title">Properties</div>
        </div>
        <div class="group w-clip">
            <div class="tools">
                <button class="big" disabled><svg><use href="#i-paste"/></svg>Paste<span class="caret"></span></button>
                <div class="col">
                    <button class="small" aria-label="Cut to clipboard"><svg><use href="#i-cutclip"/></svg></button>
                    <button class="small" aria-label="Copy to clipboard"><svg><use href="#i-copyclip"/></svg></button>
                    <button class="small" aria-label="Match type"><svg><use href="#i-match"/></svg></button>
                </div>
            </div>
            <div class="group-title">Clipboard</div>
        </div>
        <div class="group w-geom">
            <div class="tools">
                <div class="col labelled">
                    <button class="small"><svg><use href="#i-cope"/></svg>Cope<span class="caret"></span></button>
                    <button class="small"><svg><use href="#i-cut"/></svg>Cut<span class="caret"></span></button>
                    <button class="small"><svg><use href="#i-join"/></svg>Join<span class="caret"></span></button>
                </div>
                <div class="col">
                    <button class="small" aria-label="Wall opening" disabled><svg><use href="#i-wallcope"/></svg></button>
                    <button class="small" aria-label="Beam joins"><svg><use href="#i-beam"/></svg></button>
                    <button class="small" aria-label="Wall joins"><svg><use href="#i-demo"/></svg></button>
                </div>
                <div class="col">
                    <button class="small" aria-label="Split face"><svg><use href="#i-face"/></svg></button>
                    <button class="small" aria-label="Paint"><svg><use href="#i-wheel"/></svg><span class="caret"></span></button>
                    <button class="small" aria-label="Demolish"><svg><use href="#i-hammer"/></svg></button>
                </div>
            </div>
            <div class="group-title">Geometry</div>
        </div>
        <div class="group w-ctrl">
            <div class="tools"><button class="big"><svg><use href="#i-activate"/></svg>Activate</button></div>
            <div class="group-title">Controls</div>
        </div>
        <div class="group w-modify">
            <div class="tools">
                <div class="grid32">
                    <button class="icon32" aria-label="Align"><svg><use href="#i-align"/></svg></button>
                    <button class="icon32" aria-label="Offset"><svg><use href="#i-offset"/></svg></button>
                    <button class="icon32" aria-label="Mirror - pick axis"><svg><use href="#i-mirrorpick"/></svg></button>
                    <button class="icon32" aria-label="Mirror - draw axis"><svg><use href="#i-mirrordraw"/></svg></button>
                    <button class="icon32" aria-label="Move"><svg><use href="#i-move"/></svg></button>
                    <button class="icon32" aria-label="Copy"><svg><use href="#i-copy"/></svg></button>
                    <button class="icon32" aria-label="Rotate"><svg><use href="#i-rotate"/></svg></button>
                    <button class="icon32" aria-label="Trim to corner"><svg><use href="#i-trim"/></svg></button>
                </div>
                <div class="grid16">
                    <button class="small" aria-label="Split element"><svg><use href="#i-split"/></svg></button>
                    <button class="small" aria-label="Split with gap"><svg><use href="#i-splitgap"/></svg></button>
                    <button class="small" aria-label="Unpin" disabled><svg><use href="#i-unpin"/></svg></button>
                    <button class="small" aria-label="Array"><svg><use href="#i-array"/></svg></button>
                    <button class="small" aria-label="Scale" disabled><svg><use href="#i-scale"/></svg></button>
                    <button class="small" aria-label="Pin"><svg><use href="#i-pin"/></svg></button>
                    <button class="small" aria-label="Trim single"><svg><use href="#i-trim1"/></svg></button>
                    <button class="small" aria-label="Trim multiple"><svg><use href="#i-trim2"/></svg></button>
                    <button class="small" aria-label="Delete"><svg><use href="#i-delete"/></svg></button>
                </div>
            </div>
            <div class="group-title">Modify</div>
        </div>
        <div class="group w-view">
            <div class="tools">
                <div class="col first">
                    <button class="small" aria-label="Hide in view"><svg><use href="#i-bulb"/></svg><span class="caret"></span></button>
                    <button class="small" aria-label="Override graphics"><svg><use href="#i-brush"/></svg><span class="caret"></span></button>
                    <button class="small" aria-label="Selection box"><svg><use href="#i-solid"/></svg></button>
                </div>
                <div class="col">
                    <button class="small" aria-label="Displace elements"><svg><use href="#i-newview"/></svg></button>
                    <button class="small" aria-label="Linework"><svg><use href="#i-linework"/></svg></button>
                </div>
            </div>
            <div class="group-title">View</div>
        </div>
        <div class="group w-measure">
            <div class="tools stack">
                <button class="icon32" aria-label="Measure between"><svg><use href="#i-bigmeasure"/></svg><span class="caret"></span></button>
                <button class="icon32" aria-label="Dimension"><svg><use href="#i-bigaligned"/></svg><span class="caret"></span></button>
            </div>
            <div class="group-title">Measure</div>
        </div>
        <div class="group w-create">
            <div class="tools">
                <div class="grid32 two">
                    <button class="icon32" aria-label="Create group"><svg><use href="#i-group"/></svg></button>
                    <button class="icon32" aria-label="Create new group"><svg><use href="#i-newgroup"/></svg></button>
                    <button class="icon32" aria-label="Create assembly"><svg><use href="#i-assembly"/></svg></button>
                    <button class="icon32" aria-label="Create similar"><svg><use href="#i-similar"/></svg></button>
                </div>
            </div>
            <div class="group-title">Create</div>
        </div>
        <div class="group context w-mode">
            <div class="tools"><button class="big"><svg><use href="#i-editbound"/></svg>Edit<br>Boundary</button></div>
            <div class="group-title">Mode</div>
        </div>
        <div class="group context w-reinf">
            <div class="tools">
                <button class="big"><svg><use href="#i-rebar"/></svg>Rebar</button>
                <button class="big wide" disabled><svg><use href="#i-propagate"/></svg>Propagate<br>Rebar</button>
                <button class="big"><svg><use href="#i-area"/></svg>Area</button>
                <button class="big"><svg><use href="#i-path"/></svg>Path</button>
                <button class="big"><svg><use href="#i-fabarea"/></svg>Fabric<br>Area</button>
                <button class="big"><svg><use href="#i-fabsheet"/></svg>Fabric<br>Sheet</button>
            </div>
            <div class="group-title">Reinforcement</div>
        </div>
    </section>

    <div class="options-bar">Modify | Floors</div>

    <main class="workspace">
        <aside class="properties">
            <div class="palette-head">Properties<button class="close" aria-label="Close palette"><svg><use href="#i-x"/></svg></button></div>
            <button class="type-selector">
                <span class="thumb"><span></span></span>
                <span class="type-name">Floor<br>Generic 300mm</span>
                <span class="caret big-caret"></span>
            </button>
            <div class="filter-row">
                <select aria-label="Selection filter"><option>Floors (1)</option></select>
                <button class="edit-type"><svg><use href="#i-edittype"/></svg>Edit Type</button>
            </div>
            <div class="prop-scroll">
                <table class="props">
                    <colgroup><col class="c-name"><col><col class="c-btn"></colgroup>
                    <tbody>
                        <tr class="cat"><th colspan="3"><div>Constraints<svg><use href="#i-up2"/></svg></div></th></tr>
                        <tr><td><label for="p1">Level</label></td><td><input class="focused" id="p1" type="text" value="Level 2"></td><td></td></tr>
                        <tr><td><label for="p2">Height Offset Fro...</label></td><td><input id="p2" type="text" value="0.0"></td><td></td></tr>
                        <tr><td><label for="p3">Room Bounding</label></td><td><input id="p3" type="checkbox" checked></td><td></td></tr>
                        <tr class="off"><td><label for="p4">Related to Mass</label></td><td><input id="p4" type="checkbox" disabled></td><td></td></tr>
                        <tr class="cat"><th colspan="3"><div>Structural<svg><use href="#i-up2"/></svg></div></th></tr>
                        <tr><td><label for="p5">Structural</label></td><td><input id="p5" type="checkbox" checked></td><td></td></tr>
                        <tr><td><label for="p6">Rebar Cover - Top ...</label></td><td><input id="p6" type="text" value="Interior (sl..."></td><td></td></tr>
                        <tr><td><label for="p7">Rebar Cover - Bott...</label></td><td><input id="p7" type="text" value="Interior (sl..."></td><td></td></tr>
                        <tr><td><label for="p8">Rebar Cover - Oth...</label></td><td><input id="p8" type="text" value="Interior (sl..."></td><td></td></tr>
                        <tr class="cat"><th colspan="3"><div>Dimensions<svg><use href="#i-up2"/></svg></div></th></tr>
                        <tr class="off"><td><label for="p9">Slope</label></td><td><input id="p9" type="text" disabled></td><td></td></tr>
                        <tr class="off"><td><label for="p10">Perimeter</label></td><td><input id="p10" type="text" value="76000.0" disabled></td><td></td></tr>
                        <tr class="off"><td><label for="p11">Area</label></td><td><input id="p11" type="text" value="297.018 m²" disabled></td><td></td></tr>
                        <tr class="off"><td><label for="p12">Volume</label></td><td><input id="p12" type="text" value="89.105 m³" disabled></td><td></td></tr>
                        <tr class="off"><td><label for="p13">Elevation at Top</label></td><td><input id="p13" type="text" value="&lt;varies&gt;" disabled></td><td></td></tr>
                        <tr class="off"><td><label for="p14">Elevation at Bottom</label></td><td><input id="p14" type="text" value="&lt;varies&gt;" disabled></td><td></td></tr>
                        <tr class="off"><td><label for="p15">Thickness</label></td><td><input id="p15" type="text" value="300.0" disabled></td><td></td></tr>
                        <tr class="cat"><th colspan="3"><div>Identity Data<svg><use href="#i-up2"/></svg></div></th></tr>
                        <tr><td><label for="p16">Image</label></td><td><input id="p16" type="text"></td><td></td></tr>
                        <tr><td><label for="p17">Comments</label></td><td><input id="p17" type="text"></td><td><button class="assoc" aria-label="Associate parameter"></button></td></tr>
                        <tr><td><label for="p18">Mark</label></td><td><input id="p18" type="text"></td><td></td></tr>
                    </tbody>
                </table>
                <div class="vscroll">
                    <svg><use href="#i-chev"/></svg>
                    <span class="thumb-bar"></span>
                    <svg class="down"><use href="#i-chev"/></svg>
                </div>
            </div>
            <div class="palette-foot">
                <a href="#">Properties help</a>
                <button class="apply" disabled>Apply</button>
            </div>
        </aside>

        <section class="views">
            <div class="view-tabs">
                <button class="view-tab active"><svg><use href="#i-plan"/></svg>Level 2<svg class="x"><use href="#i-x"/></svg></button>
                <button class="view-tab"><svg><use href="#i-elev"/></svg>Left</button>
                <button class="view-tab"><svg><use href="#i-view3d"/></svg>View 1</button>
                <button class="view-tab"><svg><use href="#i-elev"/></svg>Front</button>
                <button class="view-tab"><svg><use href="#i-reflevel"/></svg>Ref. Level</button>
                <button class="view-tab"><svg><use href="#i-elev"/></svg>Right</button>
                <button class="view-tab"><svg><use href="#i-elev"/></svg>Back</button>
                <button class="tab-list" aria-label="Open views"><svg><use href="#i-custom"/></svg></button>
            </div>
            <div class="view-body">
                <div class="canvas">
                    <div class="floor"></div>
                    <svg class="marker north" viewBox="0 0 14 18"><circle cx="7" cy="7" r="5.500" fill="#fff" stroke="#000"/><path d="M2.500 10h9L7 14z"/><text x="7" y="17" font-size="4" text-anchor="middle" fill="#555">North</text></svg>
                    <svg class="marker south" viewBox="0 0 14 18"><circle cx="7" cy="11" r="5.500" fill="#fff" stroke="#000"/><path d="M2.500 8h9L7 4z"/><text x="7" y="3" font-size="4" text-anchor="middle" fill="#555">South</text></svg>
                    <svg class="marker west" viewBox="0 0 18 14"><circle cx="7" cy="7" r="5.500" fill="#fff" stroke="#000"/><path d="M11 4v6l3-3z"/><text transform="translate(15 7) rotate(90)" font-size="4" text-anchor="middle" fill="#555">West</text></svg>
                    <svg class="marker east" viewBox="0 0 18 14"><circle cx="11" cy="7" r="5.500" fill="#fff" stroke="#000"/><path d="M8 3v8L4 7z"/><text transform="translate(1 7) rotate(90)" font-size="4" text-anchor="middle" fill="#555">East</text></svg>
                    <div class="nav-bar">
                        <button class="nav-dot" aria-label="Close navigation bar"><svg viewBox="0 0 8 8"><circle cx="4" cy="4" r="3.500" fill="#bbb"/><path d="M2.500 2.500l3 3M5.500 2.500l-3 3" stroke="#fff"/></svg></button>
                        <button aria-label="2D steering wheel"><svg viewBox="0 0 26 26"><path d="M10 1.500h9q2 0 2 2V10a9 9 0 1 1-11-8.500z" fill="#e8e8ea" stroke="#9a9ea4" stroke-width="1.300"/><circle cx="11" cy="10" r="4" fill="#f4f4f4" stroke="#9a9ea4" stroke-width="1.500"/><path d="M5 4l3 3M5 16l3-3M14 13l3 3" stroke="#9a9ea4"/><text x="18" y="24" font-size="10" font-weight="700" text-anchor="middle" fill="#7ba3cc">2D</text></svg></button>
                        <span class="caret"></span>
                        <hr>
                        <button aria-label="Zoom region"><svg viewBox="0 0 26 26"><rect x="5.500" y="4.500" width="11" height="11" fill="#b4d4a4" stroke="#8cab80"/><circle cx="16" cy="14" r="3.500" fill="#f2f2f2" stroke="#888" stroke-width="1.500"/><path d="M18 17l4 4" stroke="#888" stroke-width="2"/></svg></button>
                        <span class="caret"></span>
                        <button class="nav-dot" aria-label="Navigation bar options"><svg viewBox="0 0 8 8"><circle cx="4" cy="4" r="3.500" fill="#bbb"/><path d="M2 3h4" stroke="#fff"/><path d="M2.500 4.500h3L4 6z" fill="#fff"/></svg></button>
                    </div>
                </div>
                <div class="vscroll main-scroll">
                    <svg><use href="#i-chev"/></svg>
                    <span class="thumb-bar"></span>
                    <svg class="down"><use href="#i-chev"/></svg>
                </div>
            </div>
            <div class="view-controls">
                <button class="scale">1 : 100</button>
                <button class="vc" aria-label="Detail level"><svg><use href="#i-detail"/></svg></button>
                <button class="vc" aria-label="Visual style"><svg><use href="#i-style"/></svg></button>
                <button class="vc" aria-label="Sun path"><svg><use href="#i-sun"/></svg></button>
                <button class="vc" aria-label="Shadows"><svg><use href="#i-shadow"/></svg></button>
                <button class="vc" aria-label="Crop view"><svg><use href="#i-crop"/></svg></button>
                <button class="vc" aria-label="Show crop region"><svg><use href="#i-showcrop"/></svg></button>
                <button class="vc" aria-label="Temporary hide"><svg><use href="#i-glasses"/></svg></button>
                <button class="vc" aria-label="Reveal hidden"><svg><use href="#i-reveal"/></svg></button>
                <button class="vc" aria-label="Temporary view properties"><svg><use href="#i-tempview"/></svg></button>
                <button class="vc" aria-label="Analytical model"><svg><use href="#i-analytic"/></svg></button>
                <button class="vc" aria-label="Reveal constraints"><svg><use href="#i-lockdim"/></svg></button>
                <div class="hscroll">
                    <svg class="left"><use href="#i-chev"/></svg>
                    <span class="thumb-bar"></span>
                    <svg class="right"><use href="#i-chev"/></svg>
                </div>
                <svg class="grip" viewBox="0 0 9 9"><path d="M6 0h2v2H6zM3 3h2v2H3zM6 3h2v2H6zM0 6h2v2H0zM3 6h2v2H3zM6 6h2v2H6z" fill="#bbb"/></svg>
            </div>
        </section>

        <aside class="browser">
            <div class="palette-head">Project Browser</div>
            <ul class="tree">
                <li><div class="node"><button class="exp" aria-label="Collapse"></button><i></i><svg><use href="#i-views"/></svg><span class="selected">Views (all)</span></div>
                    <ul>
                        <li><div class="node"><button class="exp" aria-label="Collapse"></button><i></i><span>Structural Plans</span></div>
                            <ul class="leaves">
                                <li><i></i><svg><use href="#i-viewitem"/></svg></li>
                                <li><i></i><svg><use href="#i-viewitem"/></svg></li>
                                <li><i></i><svg><use href="#i-viewitem"/></svg></li>
                                <li><i></i><svg><use href="#i-viewitem"/></svg></li>
                                <li><i></i><svg><use href="#i-viewitem"/></svg></li>
                            </ul>
                        </li>
                        <li><div class="node"><button class="exp" aria-label="Collapse"></button><i></i><span>3D Views</span></div>
                            <ul class="leaves">
                                <li><i></i><svg><use href="#i-viewitem"/></svg></li>
                            </ul>
                        </li>
                        <li class="last"><div class="node"><button class="exp" aria-label="Collapse"></button><i></i><span>Elevations</span></div>
                            <ul class="leaves">
                                <li><i></i><svg><use href="#i-viewitem"/></svg></li>
                                <li><i></i><svg><use href="#i-viewitem"/></svg></li>
                                <li><i></i><svg><use href="#i-viewitem"/></svg></li>
                                <li><i></i><svg><use href="#i-viewitem"/></svg></li>
                            </ul>
                        </li>
                    </ul>
                </li>
                <li><div class="node plain"><i></i><svg><use href="#i-legend"/></svg><span>Legends</span></div></li>
                <li><div class="node plain"><i></i><svg><use href="#i-schedule"/></svg><span>Schedules</span></div></li>
                <li><div class="node plain"><i></i><svg><use href="#i-sheet"/></svg><span>Sheets (all)</span></div></li>
                <li><div class="node"><button class="exp closed" aria-label="Expand"></button><i></i><svg><use href="#i-family"/></svg><span>Families</span></div></li>
                <li><div class="node"><button class="exp closed" aria-label="Expand"></button><i></i><svg><use href="#i-groups"/></svg><span>Groups</span></div></li>
                <li class="last"><div class="node plain"><i></i><svg><use href="#i-links"/></svg><span>Revit Links</span></div></li>
            </ul>
            <div class="hscroll browser-scroll">
                <svg class="left"><use href="#i-chev"/></svg>
                <span class="thumb-bar"></span>
            </div>
        </aside>
    </main>
</body>
</html>
```

FILE: styles.css
```
* {
    box-sizing: border-box;
}

body {
    margin: 0;
    height: 100vh;
    display: flex;
    flex-direction: column;
    overflow: hidden;
    background-color: #ccc;
    color: #2b2b2b;
    font-family: "Open Sans", "Noto Sans", sans-serif;
    font-size: 12px;
    line-height: 16px;
}

button,
input,
select {
    font: inherit;
    color: inherit;
    margin: 0;
    padding: 0;
    border: none;
    background: none;
    white-space: nowrap;
}

svg {
    display: block;
    flex: none;
    width: 16px;
    height: 16px;
}

.sprite {
    position: absolute;
    width: 0;
    height: 0;
}

.caret {
    flex: none;
    display: flex;
    align-items: center;
    justify-content: center;
    width: 12px;
    height: 12px;
}

.caret::before {
    content: "";
    border: 3px solid transparent;
    border-top-color: #555;
    border-bottom: none;
}

.caret.left::before {
    border: 4px solid transparent;
    border-right-color: #333;
    border-left: none;
}

.caret.dark::before {
    border-top-color: #111;
}

.big-caret::before {
    border-width: 4px;
    border-top-color: #333;
}

/* Title bar */
.title-bar {
    flex: none;
    display: flex;
    align-items: center;
    height: 26px;
    padding-bottom: 8px;
}

.app-logo {
    align-self: flex-start;
    width: 20px;
    height: 20px;
    margin: 0 2px;
    padding-bottom: 6px;
    background: linear-gradient(#1a6af0 70%, #0a3c94 70%);
    color: #fff;
    font-weight: 700;
    line-height: 14px;
}

.qat {
    flex: none;
    display: flex;
    justify-content: center;
    width: 24px;
}

.panel-btn {
    margin-right: 5px;
}

.text-tool {
    font-size: 19px;
    font-weight: 700;
    line-height: 18px;
    color: #3a4048;
}

.help {
    width: 17px;
    height: 17px;
    border: 1px solid #3a4048;
    border-radius: 50%;
    background-color: #fff;
    color: #2456b8;
    font-weight: 700;
    line-height: 15px;
}

.customise {
    width: 16px;
}

.sep {
    flex: none;
    width: 1px;
    height: 20px;
    margin: 0 3px;
    background-color: #b4b4b4;
}

.window-title {
    margin-left: 68px;
    margin-bottom: 4px;
    white-space: nowrap;
}

.account {
    display: flex;
    align-items: center;
    margin-left: auto;
    padding-right: 26px;
}

.account .sep {
    margin: 0 5px 0 4px;
}

.user-name {
    width: 82px;
}

.cart {
    margin-left: 4px;
}

/* Ribbon tabs */
.ribbon-tabs {
    flex: none;
    display: flex;
    align-items: center;
    height: 20px;
}

.tab {
    height: 20px;
    padding: 0 8px 0 9px;
}

.tab.file {
    width: 45px;
    margin-right: 3px;
    background-color: #1b6ca8;
    color: #fff;
}

.tab.active {
    margin-left: 4px;
    padding: 0 9px;
    background-color: #e5efd6;
    color: #111;
}

.minimise {
    width: 15px;
    height: 9px;
    margin-left: 22px;
    border: 1px solid #444;
    border-radius: 3px;
    background-color: #eee;
    display: flex;
    align-items: center;
    justify-content: center;
}

.minimise span {
    border: 3px solid transparent;
    border-bottom-color: #222;
    border-top: none;
}

/* Ribbon */
.ribbon {
    flex: none;
    display: flex;
    height: 96px;
    padding: 1px 0 1px 1px;
    background-color: #e5efd6;
    border-bottom: 1px solid #ccc;
}

.group {
    flex: none;
    display: flex;
    flex-direction: column;
    background-color: #eee;
    border-right: 1px solid #e0ecce;
}

.tools {
    flex: 1;
    display: flex;
    padding-top: 2px;
}

.tools.stack {
    flex-direction: column;
    align-items: center;
}

.group-title {
    height: 19px;
    line-height: 19px;
    text-align: center;
    display: flex;
    justify-content: center;
}

.group-title .caret {
    margin: 4px 0 0 4px;
}

.w-select { width: 57px; }
.w-props { width: 63px; }
.w-clip { width: 80px; }
.w-geom { width: 139px; }
.w-ctrl { width: 56px; }
.w-modify { width: 238px; }
.w-view { width: 66px; }
.w-measure { width: 56px; }
.w-create { width: 82px; }
.w-mode { width: 60px; }
.w-reinf { width: 254px; }

.context {
    margin-left: 3px;
}

.context + .context {
    margin-left: 2px;
}

.context .group-title {
    background-color: #e5efd6;
}

.big {
    display: flex;
    flex-direction: column;
    align-items: center;
    width: 44px;
    height: 72px;
    margin: 0 auto;
    padding-top: 2px;
    line-height: 15px;
}

.big svg {
    width: 32px;
    height: 32px;
    margin-bottom: 4px;
}

.pressed {
    background-color: #b5d6f3;
    border: 1px solid #1c6cc0;
}

.pressed.big {
    padding-top: 1px;
}

button:disabled {
    color: #a5a5a5;
}

button:disabled .caret::before {
    border-top-color: #999;
}

.icon32 {
    display: flex;
    align-items: center;
    justify-content: center;
    width: 38px;
    height: 36px;
}

.icon32 svg {
    width: 30px;
    height: 30px;
}

.w-measure .icon32 {
    width: 54px;
    gap: 4px;
}

.w-clip .big {
    margin: 0 0 0 5px;
}

.w-clip .col {
    margin-left: 8px;
}

.small {
    display: flex;
    align-items: center;
    height: 24px;
}

.labelled {
    width: 71px;
    margin-left: 7px;
}

.labelled svg {
    margin-right: 5px;
}

.labelled .caret {
    margin-left: 4px;
}

.w-geom .col + .col {
    width: 25px;
}

.grid32 {
    display: grid;
    grid-template-columns: repeat(4, 39px);
    height: 72px;
    margin-left: 3px;
}

.grid32.two {
    grid-template-columns: repeat(2, 39px);
    margin-left: 2px;
}

.grid16 {
    display: grid;
    grid-template-columns: repeat(3, 25px);
    height: 72px;
    margin-left: 6px;
}

.w-view .first {
    width: 36px;
    margin-left: 6px;
}

.w-reinf .big {
    width: 38px;
    margin: 0;
}

.w-reinf .big:first-child {
    margin-left: 2px;
}

.w-reinf .big.wide {
    width: 60px;
}

.options-bar {
    flex: none;
    height: 26px;
    padding: 6px 8px;
    background-color: #e5efd6;
    color: #999;
    text-shadow: 1px 1px #fff;
}

/* Workspace */
.workspace {
    flex: 1;
    display: flex;
    min-height: 0;
    gap: 2px;
    padding-top: 2px;
}

.palette-head {
    flex: none;
    display: flex;
    justify-content: space-between;
    align-items: center;
    height: 20px;
    padding: 2px 5px 0 3px;
    white-space: nowrap;
}

.close svg {
    width: 10px;
    height: 10px;
}

.properties {
    flex: none;
    display: flex;
    flex-direction: column;
    width: 219px;
    background-color: #efefef;
}

.type-selector {
    flex: none;
    display: flex;
    align-items: center;
    height: 72px;
    margin: 0 2px 0 1px;
    border: 1px solid #ccc;
    text-align: left;
}

.type-selector .caret {
    margin-left: auto;
}

.type-name {
    padding-top: 2px;
}

.thumb {
    display: flex;
    align-items: center;
    width: 67px;
    height: 66px;
    margin: 0 4px 0 1px;
    border: 1px solid #ccc;
    background-color: #fff;
}

.thumb span {
    width: 100%;
    height: 23px;
    border: 1px solid #777;
    border-left: none;
    background-color: #a0a0a0;
}

.filter-row {
    flex: none;
    display: flex;
    align-items: center;
    height: 24px;
    padding-left: 1px;
}

.filter-row select {
    appearance: none;
    width: 134px;
    height: 22px;
    padding-left: 3px;
    border: 1px solid #adadad;
    background: #e1e1e1 url("data:image/svg+xml,%3Csvg xmlns='http://www.w3.org/2000/svg' width='10' height='6'%3E%3Cpath d='M1 1l4 4 4-4' fill='none' stroke='%23555'/%3E%3C/svg%3E") no-repeat right 3px center;
    color: #111;
}

.edit-type {
    display: flex;
    align-items: center;
    margin-left: 6px;
    padding-bottom: 2px;
}

.edit-type svg {
    margin-right: 4px;
}

.prop-scroll {
    flex: 1;
    min-height: 0;
    display: flex;
    overflow: hidden;
}

.props {
    flex: none;
    width: 200px;
    height: max-content;
    table-layout: fixed;
    border-spacing: 0;
    background-color: #fff;
    color: #111;
}

.c-name {
    width: 119px;
}

.c-btn {
    width: 12px;
}

.props td,
.props th {
    height: 18px;
    padding: 0;
    white-space: nowrap;
    line-height: 17px;
    vertical-align: top;
}

.props td {
    border-right: 1px dotted #777;
    border-bottom: 1px dotted #777;
}

.props td:first-child {
    padding-left: 8px;
}

.cat th {
    font-weight: 400;
    text-align: left;
    background-color: #dcdcdc;
}

.cat div {
    display: flex;
    align-items: center;
    justify-content: space-between;
    height: 18px;
    padding: 0 6px 0 3px;
}

.cat svg {
    width: 8px;
    height: 8px;
}

.props label {
    display: block;
}

.props input[type="text"] {
    display: block;
    width: 100%;
    height: 17px;
    padding: 0 0 0 2px;
}

.props input.focused {
    padding-left: 1px;
    border: 1px solid #000;
}

.props input[type="checkbox"] {
    appearance: none;
    display: block;
    width: 13px;
    height: 13px;
    margin: 3px 0 0 3px;
    border: 1px solid #333;
    background-color: #fff;
}

.props input[type="checkbox"]:disabled {
    border-color: #ccc;
}

.props input[type="checkbox"]:checked::before {
    content: "";
    display: block;
    width: 8px;
    height: 4px;
    margin: 2px 1px;
    border: 1px solid #222;
    border-top: none;
    border-right: none;
    transform: rotate(-45deg);
}

.off {
    color: #7a7a7a;
}

.assoc {
    display: block;
    width: 10px;
    height: 17px;
    border: 1px solid #aaa;
    background-color: #ddd;
}

.vscroll {
    display: flex;
    flex-direction: column;
    align-items: center;
    width: 17px;
    background-color: #f0f0f0;
}

.vscroll svg {
    width: 8px;
    height: 8px;
    margin: 5px;
}

.hscroll svg {
    width: 8px;
    height: 8px;
    margin: 0 2px;
}

.vscroll .down {
    margin-top: auto;
    transform: rotate(180deg);
}

.thumb-bar {
    background-color: #cdcdcd;
}

.prop-scroll .thumb-bar {
    width: 15px;
    height: 222px;
}

.palette-foot {
    flex: none;
    display: flex;
    justify-content: space-between;
    height: 27px;
    padding: 2px 4px 3px 3px;
    line-height: 20px;
}

.palette-foot a {
    color: #0066cc;
}

.apply {
    width: 73px;
    height: 21px;
    border: 1px solid #bfbfbf;
    background-color: #ccc;
}

button.apply:disabled {
    color: #888;
}

/* Views */
.views {
    flex: 1;
    min-width: 0;
    display: flex;
    flex-direction: column;
}

.view-tabs {
    flex: none;
    display: flex;
    height: 20px;
}

.view-tab {
    display: flex;
    align-items: center;
    width: 128px;
    padding: 2px 5px 0;
}

.view-tab svg {
    margin-right: 7px;
}

.view-tab.active {
    background-color: #fff;
    font-weight: 600;
}

.view-tab .x {
    width: 10px;
    height: 10px;
    margin: 0 0 0 auto;
}

.tab-list {
    margin: 2px 2px 0 auto;
}

.view-body {
    flex: 1;
    min-height: 0;
    display: flex;
}

.canvas {
    flex: 1;
    position: relative;
    background-color: #fff;
}

.floor {
    position: absolute;
    left: 376px;
    top: 185px;
    width: 231px;
    height: 94px;
    border: 1px solid #0a3cac;
    background-color: #34508e;
}

.marker {
    position: absolute;
    width: 14px;
    height: 18px;
}

.marker.north {
    left: 491px;
    top: 38px;
}

.marker.south {
    left: 491px;
    top: 463px;
}

.marker.west,
.marker.east {
    width: 18px;
    height: 14px;
    top: 252px;
}

.marker.west {
    left: 276px;
}

.marker.east {
    left: 702px;
}

.nav-bar {
    position: absolute;
    top: 2px;
    right: 1px;
    width: 36px;
    height: 118px;
    display: flex;
    flex-direction: column;
    align-items: center;
    border: 2px solid #c4c4c4;
    border-radius: 6px;
    background-color: #f2f2f2;
}

.nav-bar svg {
    width: 26px;
    height: 26px;
}

.nav-bar hr {
    width: 26px;
    margin: 1px 0 4px;
    border: none;
    border-top: 1px solid #bbb;
}

.nav-bar .caret::before {
    border-top-color: #888;
}

.nav-bar .nav-dot {
    align-self: flex-end;
    margin-right: 2px;
}

.nav-dot:first-child {
    margin-bottom: 9px;
}

.nav-dot:last-child {
    margin-top: auto;
}

.nav-bar .nav-dot svg {
    width: 9px;
    height: 9px;
}

.main-scroll {
    width: 18px;
    padding: 1px 3px 0 0;
}

.main-scroll .thumb-bar {
    width: 15px;
    height: 17px;
    margin-top: 220px;
}

.view-controls {
    flex: none;
    display: flex;
    align-items: center;
    height: 19px;
    margin-bottom: 1px;
    background-color: #f0f0f0;
}

.scale {
    width: 81px;
    padding-left: 5px;
    color: #111;
}

.vc {
    flex: none;
    width: 21px;
}

.hscroll {
    flex: 1;
    display: flex;
    align-items: center;
}

.hscroll .left {
    transform: rotate(-90deg);
}

.hscroll .right {
    margin-left: auto;
    transform: rotate(90deg);
}

.hscroll .thumb-bar {
    width: 17px;
    height: 15px;
    margin-left: 294px;
}

.grip {
    width: 9px;
    height: 9px;
    margin: 4px 4px 0 8px;
}

/* Project browser */
.browser {
    flex: none;
    display: flex;
    flex-direction: column;
    width: 78px;
    padding-left: 2px;
    overflow: hidden;
    background-color: #efefef;
}

.browser .palette-head {
    padding-left: 2px;
}

.tree,
.tree ul {
    list-style: none;
    margin: 0;
    padding: 0;
}

.tree {
    flex: 1;
    width: 240px;
    padding-left: 4px;
    background-color: #fff;
    color: #111;
}

/* dotted guide line down the left of every branch */
.tree li {
    background: repeating-linear-gradient(#999 0 1px, transparent 1px 2px) 4px 0 / 1px 100% no-repeat;
}

.tree .last,
.leaves li:last-child {
    background-size: 1px 9px;
}

.tree li ul {
    margin-left: 20px;
}

.node,
.leaves li {
    display: flex;
    align-items: center;
    height: 18px;
    white-space: nowrap;
}

.tree i {
    flex: none;
    width: 7px;
    border-top: 1px dotted #999;
}

.tree li li .node i {
    width: 9px;
    margin-right: 2px;
}

.plain i {
    width: 12px;
    margin-left: 4px;
}

.leaves i {
    width: 12px;
    margin-left: 4px;
}

.node svg {
    margin-right: 4px;
}

.node span {
    padding: 0 2px;
}

.selected {
    background-color: #dcdcdc;
}

.exp {
    flex: none;
    width: 9px;
    height: 9px;
    border: 1px solid #888;
    background: linear-gradient(#24479c, #24479c) center / 5px 1px no-repeat, #fff;
}

.exp.closed {
    background: linear-gradient(#24479c, #24479c) center / 5px 1px no-repeat, linear-gradient(#24479c, #24479c) center / 1px 5px no-repeat, #fff;
}

.browser-scroll {
    flex: none;
    height: 16px;
    margin-bottom: 2px;
    padding-left: 3px;
    background-color: #f0f0f0;
}

.browser-scroll .thumb-bar {
    flex: 1;
    margin-left: 3px;
}
```
